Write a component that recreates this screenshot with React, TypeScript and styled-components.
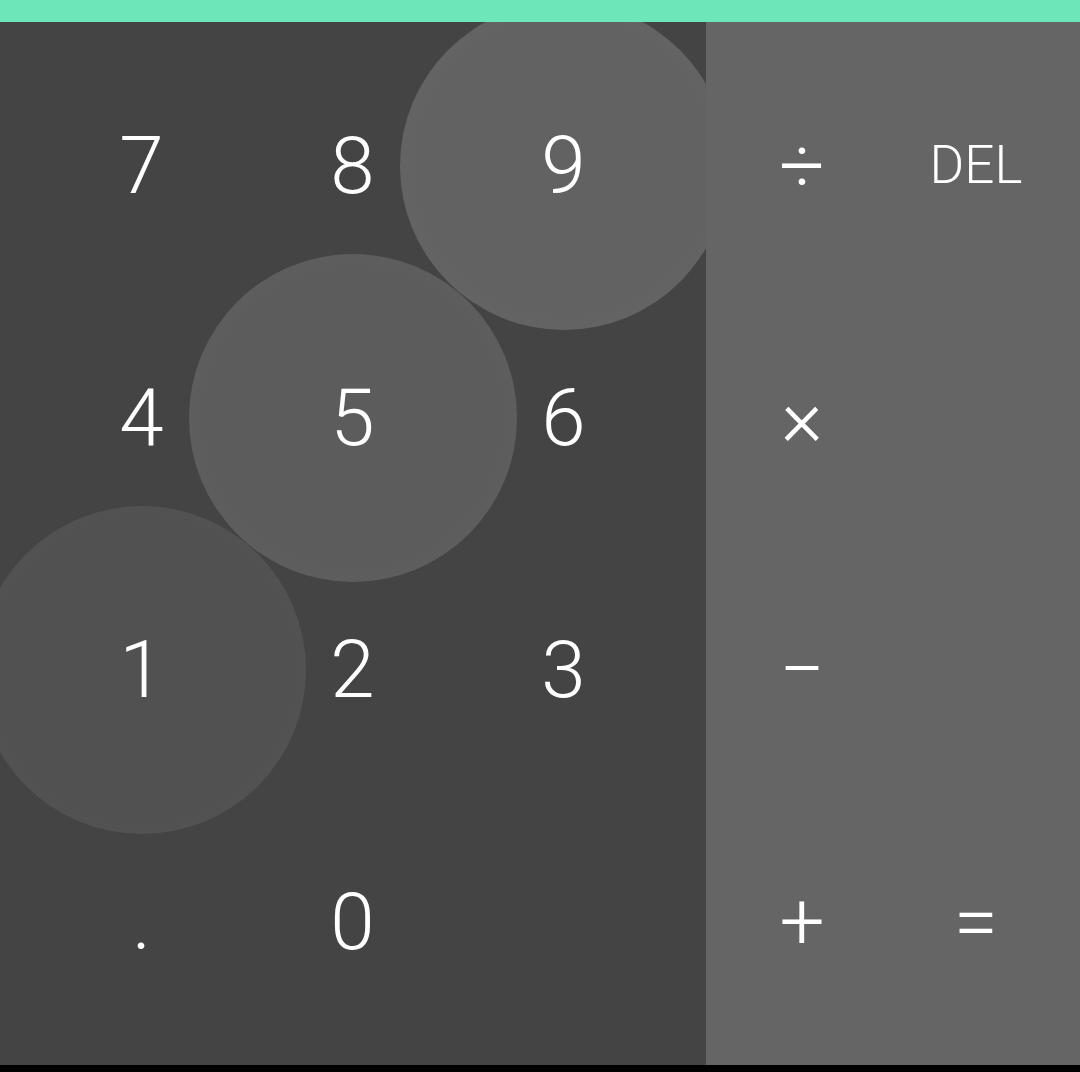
import styled, { createGlobalStyle } from "styled-components"

const GlobalStyle = createGlobalStyle`
  html, body {
    margin: 0;
    padding: 0;
    background: #000;
  }
  body {
    font-family: Roboto, "Noto Sans", "Liberation Sans", sans-serif;
    -webkit-font-smoothing: antialiased;
  }
`

type Tone = "faint" | "mid" | "bright"

interface KeyDef {
  label: string
  ripple?: Tone
}

const digits: KeyDef[] = [
  { label: "7" }, { label: "8" }, { label: "9", ripple: "bright" },
  { label: "4" }, { label: "5", ripple: "mid" }, { label: "6" },
  { label: "1", ripple: "faint" }, { label: "2" }, { label: "3" },
  { label: "." }, { label: "0" }, { label: "" },
]

const operators = ["÷", "DEL", "×", "", "−", "", "+", "="]

const rippleColors: Record<Tone, [string, string]> = {
  faint: ["#515151", "#535353"],
  mid: ["#5c5c5c", "#5f5f5f"],
  bright: ["#626262", "#656565"],
}

export default function App() {
  return (
    <>
      <GlobalStyle />
      <Screen>
        <StatusStrip />
        <Pad>
          <NumberPad>
            {digits.map((key, i) => (
              <DigitKey key={i}>
                {key.ripple && <Ripple tone={key.ripple} />}
                <KeyLabel>{key.label}</KeyLabel>
              </DigitKey>
            ))}
          </NumberPad>
          <OperatorPad>
            {operators.map((op, i) => (
              <OperatorKey key={i} small={op === "DEL"}>
                {op}
              </OperatorKey>
            ))}
          </OperatorPad>
        </Pad>
        <NavStrip />
      </Screen>
    </>
  )
}

const Screen = styled.div`
  width: 1080px;
  height: 1072px;
  display: flex;
  flex-direction: column;
  overflow: hidden;
`

const StatusStrip = styled.div`
  height: 22px;
  flex: none;
  background: #6de6ba;
`

const NavStrip = styled.div`
  height: 7px;
  flex: none;
  background: #000;
`

const Pad = styled.div`
  flex: 1;
  display: flex;
  min-height: 0;
`

const NumberPad = styled.div`
  width: 706px;
  flex: none;
  display: grid;
  grid-template-columns: repeat(3, 211px);
  grid-template-rows: repeat(4, 252px);
  align-content: center;
  padding: 0 36px;
  box-sizing: border-box;
  background: #444444;
  overflow: hidden;
`

const DigitKey = styled.div`
  position: relative;
  display: flex;
  align-items: center;
  justify-content: center;
`

const Ripple = styled.div<{ tone: Tone }>`
  position: absolute;
  left: 50%;
  top: 50%;
  width: 328px;
  height: 328px;
  transform: translate(-50%, -50%);
  border-radius: 50%;
  background: ${({ tone }) =>
    `radial-gradient(circle, ${rippleColors[tone][0]} 0%, ${rippleColors[tone][0]} 62%, ${rippleColors[tone][1]} 80%, ${rippleColors[tone][0]} 100%)`};
`

const KeyLabel = styled.span`
  position: relative;
  color: #ffffff;
  font-size: 80px;
  font-weight: 300;
  line-height: 1;
`

const OperatorPad = styled.div`
  flex: 1;
  display: grid;
  grid-template-columns: repeat(2, 174px);
  grid-template-rows: repeat(4, 252px);
  align-content: center;
  padding-left: 9px;
  background: #656565;
`

const OperatorKey = styled.div<{ small?: boolean }>`
  display: flex;
  align-items: center;
  justify-content: center;
  color: #ffffff;
  font-size: ${({ small }) => (small ? "53px" : "80px")};
  font-weight: 300;
  line-height: 1;
`
